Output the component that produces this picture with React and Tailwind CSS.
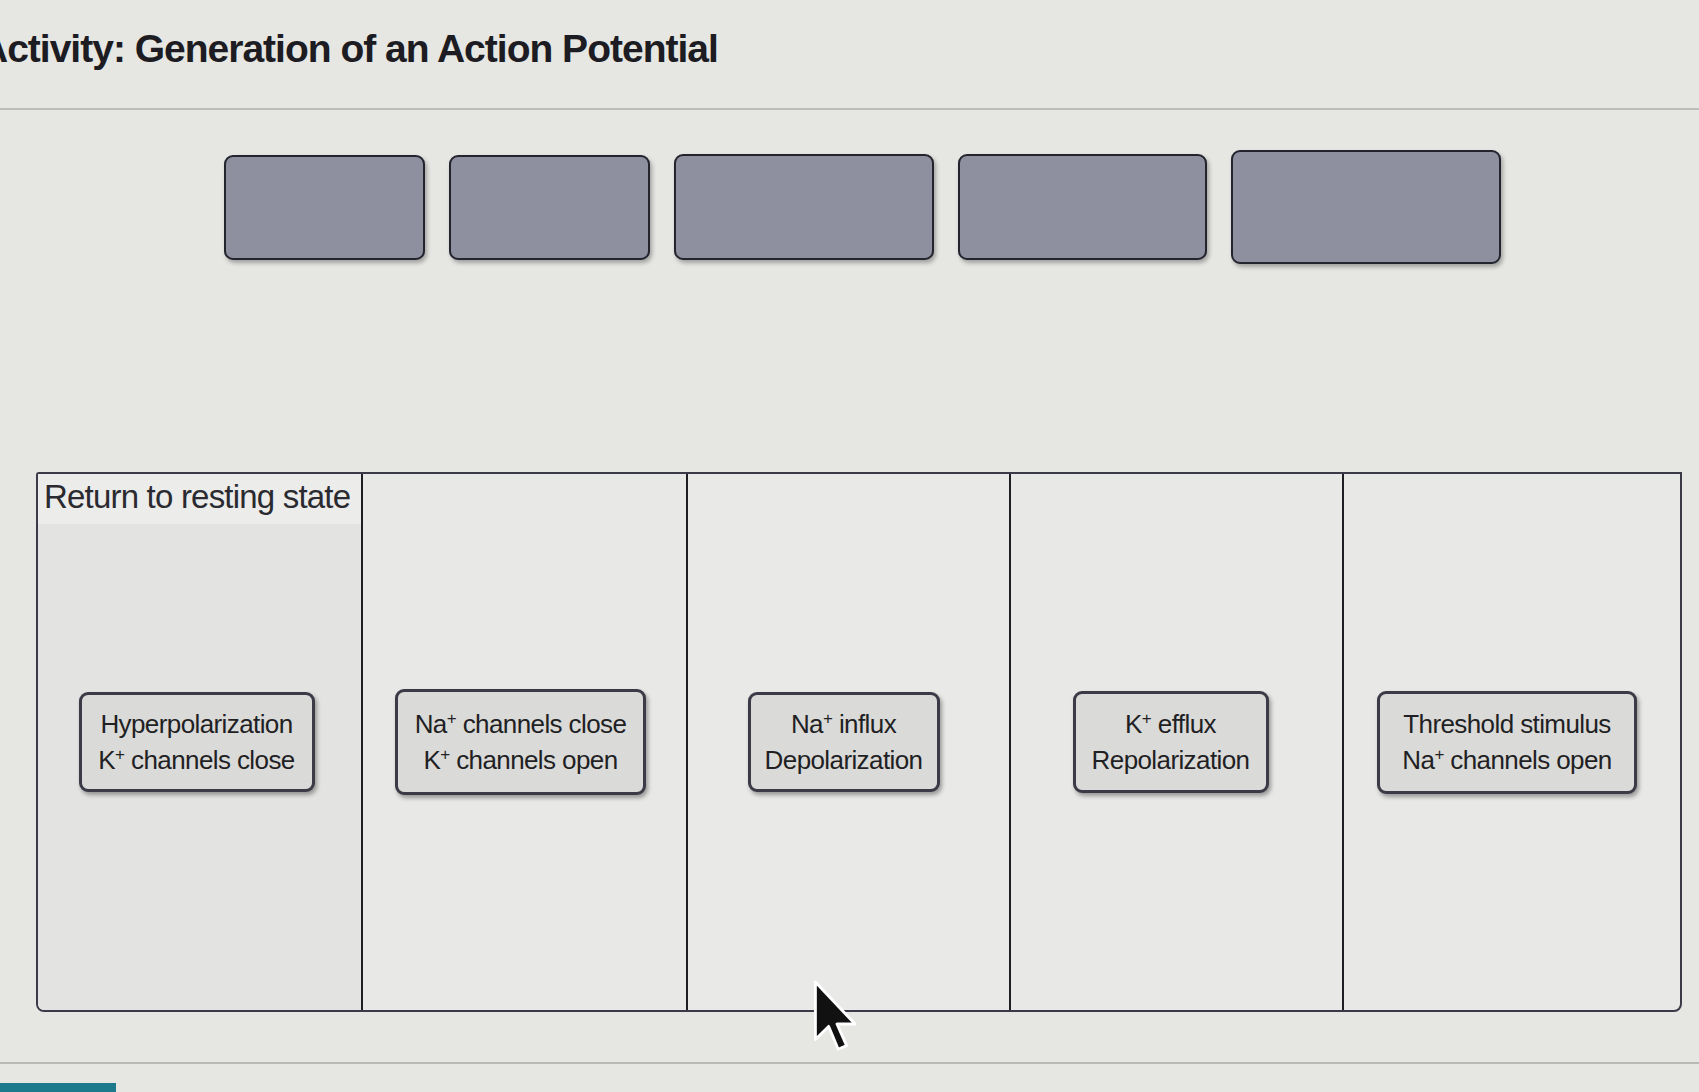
const slots = [
  { w: 'w-[201px] h-[105px]' },
  { w: 'w-[201px] h-[105px]' },
  { w: 'w-[260px] h-[106px]' },
  { w: 'w-[249px] h-[106px]' },
  { w: 'w-[270px] h-[114px]' },
];

function Sup({ children }) {
  return <sup className="relative -top-[9px] text-[17px]">{children}</sup>;
}

function Card({ className, children }) {
  return (
    <div
      className={`flex flex-col items-center justify-center rounded-[9px] border-[3px] border-[#3b3b48] bg-[#dadad8] text-center text-[26px] leading-[36px] tracking-[-0.6px] text-[#1f1f24] shadow-[2px_3px_4px_rgba(0,0,0,0.35)] ${className}`}
    >
      {children}
    </div>
  );
}

export default function App() {
  return (
    <div className="relative h-[1092px] w-[1699px] overflow-hidden bg-[#e6e6e3] font-['Liberation_Sans',Arial,sans-serif]">
      <header className="h-[110px] border-b-2 border-[#bdbdbb] pt-[29px]">
        <h1 className="-ml-[20px] whitespace-nowrap text-[39px] font-bold leading-none tracking-[-1px] text-[#1c1c22]">
          Activity: Generation of an Action Potential
        </h1>
      </header>

      {/* drop targets */}
      <div className="mt-[40px] flex h-[114px] items-center gap-[24px] pl-[224px]">
        {slots.map((s, i) => (
          <div
            key={i}
            className={`${s.w} rounded-[9px] border-2 border-[#24242f] bg-[#8e8f9f] shadow-[2px_3px_4px_rgba(0,0,0,0.3)]`}
          />
        ))}
      </div>

      {/* answer bank */}
      <div className="ml-[36px] mt-[208px] grid h-[540px] w-[1646px] grid-cols-[323px_325px_323px_333px_1fr] overflow-hidden rounded-b-[8px] rounded-tl-[3px] border-2 border-[#3a3a48] bg-[#e8e8e6]">
        <div className="relative flex items-center justify-center bg-[#e3e3e1] pr-[6px]">
          <div className="absolute left-0 top-0 h-[50px] w-full bg-[#ececea] pl-[6px] pt-[4px] text-[33px] leading-[38px] tracking-[-0.8px] text-[#2a2a30]">
            Return to resting state
          </div>
          <Card className="w-[236px] h-[100px]">
            <span>Hyperpolarization</span>
            <span>K<Sup>+</Sup> channels close</span>
          </Card>
        </div>
        <div className="flex items-center justify-center border-l-2 border-[#1e1e24] pr-[8px]">
          <Card className="w-[251px] h-[106px]">
            <span>Na<Sup>+</Sup> channels close</span>
            <span>K<Sup>+</Sup> channels open</span>
          </Card>
        </div>
        <div className="flex items-center justify-center border-l-2 border-[#1e1e24] bg-[#e9e9e7] pr-[10px]">
          <Card className="w-[192px] h-[100px]">
            <span>Na<Sup>+</Sup> influx</span>
            <span>Depolarization</span>
          </Card>
        </div>
        <div className="flex items-center justify-center border-l-2 border-[#1e1e24] pr-[12px]">
          <Card className="w-[196px] h-[102px]">
            <span>K<Sup>+</Sup> efflux</span>
            <span>Repolarization</span>
          </Card>
        </div>
        <div className="flex items-center justify-center border-l-2 border-[#1e1e24] pr-[10px]">
          <Card className="w-[260px] h-[103px]">
            <span>Threshold stimulus</span>
            <span>Na<Sup>+</Sup> channels open</span>
          </Card>
        </div>
      </div>

      <div className="mt-[50px] border-t-2 border-[#b9b9b7]" />
      <div className="mt-[19px] h-[12px] w-[116px] bg-[#1d7a8c]" />

      {/* mouse pointer */}
      <svg
        className="absolute left-[813px] top-[978px]"
        width="48"
        height="80"
        viewBox="0 0 20 32"
      >
        <path
          d="M1 1 L1 25 L6.5 19.5 L10.5 29 L14 27.5 L10 18.5 L17.5 18.5 Z"
          fill="#111"
          stroke="#fff"
          strokeWidth="1.2"
          strokeLinejoin="round"
        />
      </svg>
    </div>
  );
}
